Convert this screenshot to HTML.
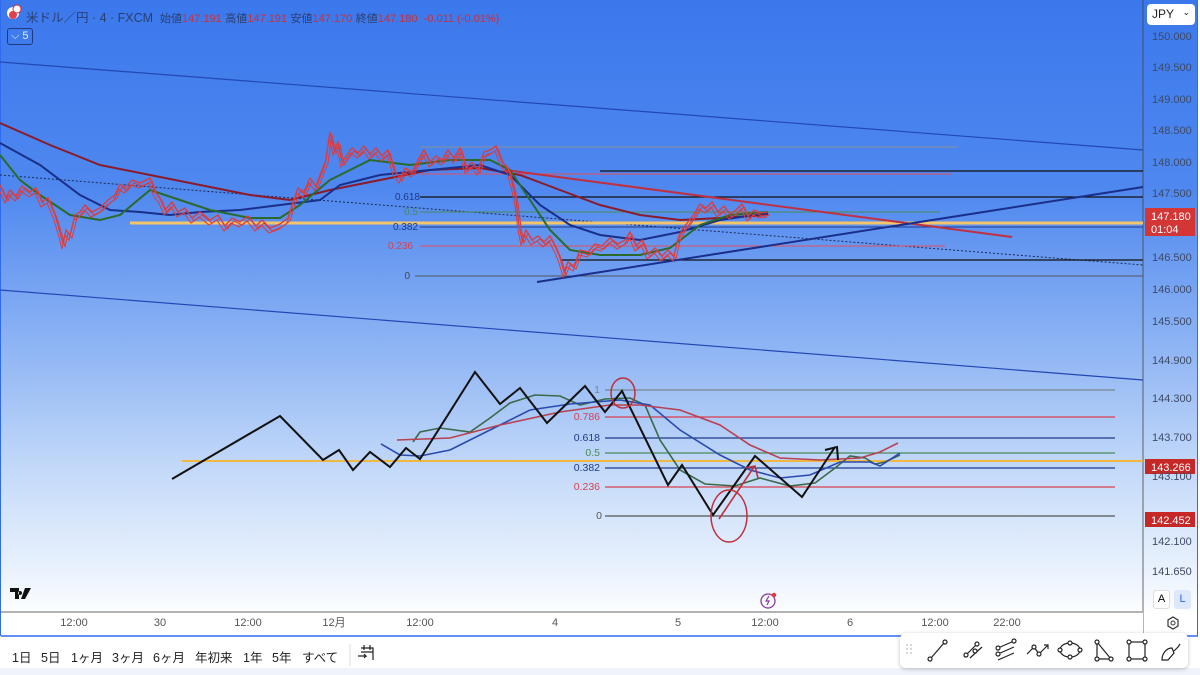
<!DOCTYPE html>
<html><head><meta charset="utf-8"><style>
*{margin:0;padding:0;box-sizing:border-box}
body{width:1200px;height:675px;overflow:hidden;background:#fff;font-family:"Liberation Sans","Noto Sans CJK JP",sans-serif;position:relative}
.chart{position:absolute;left:0;top:0;width:1198px;height:636px;border:1px solid #2f6bf0;border-top:none;background:linear-gradient(180deg,#3b78ec 0%,#4f88ef 30%,#8fb5f4 55%,#c6dbf9 75%,#eaf2fd 90%,#fbfdff 96%,#fff 100%)}
.ax{position:absolute;font-size:11px;color:#3d4a66}
.tl{position:absolute;top:617px;font-size:11px;line-height:13px;color:#555;transform:translateX(-50%)}
.bt{position:absolute;top:647px;font-size:12.5px;color:#222}
</style></head><body>
<div class="chart"></div>
<svg width="1200" height="675" style="position:absolute;left:0;top:0">
<line x1="1143" y1="0" x2="1143" y2="636" stroke="#444" stroke-width="0.8"/>
<rect x="1" y="611" width="1142" height="25" fill="#fff"/>
<rect x="1144" y="611" width="53" height="25" fill="#fff"/>
<line x1="1" y1="612" x2="1143" y2="612" stroke="#999" stroke-width="1.5"/>
<line x1="1" y1="636" x2="1198" y2="636" stroke="#2f6bf0" stroke-width="1.5"/>
<line x1="0" y1="62" x2="1143" y2="150" stroke="#2347b5" stroke-width="1.2"/>
<line x1="0" y1="290" x2="1143" y2="380" stroke="#2347b5" stroke-width="1.2"/>
<line x1="0" y1="175" x2="1143" y2="265" stroke="#1e2a55" stroke-width="1" stroke-dasharray="2,2"/>
<line x1="420" y1="147" x2="958" y2="147" stroke="#8a8f9a" stroke-width="1"/>
<line x1="420" y1="174" x2="952" y2="174" stroke="#e05060" stroke-width="1"/>
<line x1="600" y1="171" x2="1143" y2="171" stroke="#111" stroke-width="1.2"/>
<line x1="420" y1="197" x2="1143" y2="197" stroke="#111" stroke-width="1.2"/>
<line x1="420" y1="212" x2="940" y2="212" stroke="#4a8a5a" stroke-width="1"/>
<line x1="130" y1="223" x2="1143" y2="223" stroke="#f2c56a" stroke-width="3"/>
<line x1="420" y1="227" x2="1143" y2="227" stroke="#1e3a8a" stroke-width="1"/>
<line x1="420" y1="246" x2="945" y2="246" stroke="#e05060" stroke-width="1"/>
<line x1="560" y1="260" x2="1143" y2="260" stroke="#111" stroke-width="1.2"/>
<line x1="415" y1="276" x2="1143" y2="276" stroke="#555" stroke-width="1"/>
<g font-size="10" text-anchor="end">
<text x="420" y="200" fill="#1e3a8a">0.618</text>
<text x="418" y="215" fill="#4a8a5a">0.5</text>
<text x="418" y="230" fill="#1e3a8a">0.382</text>
<text x="413" y="249" fill="#d84050">0.236</text>
<text x="410" y="279" fill="#444">0</text>
</g>
<line x1="505" y1="170" x2="1012" y2="237" stroke="#c03040" stroke-width="2"/>
<line x1="537" y1="282" x2="1143" y2="187" stroke="#1a2f8a" stroke-width="2"/>
<polyline fill="none" stroke="#8b1a2a" stroke-width="2" points="0,123 50,145 100,165 150,175 200,185 250,195 290,200 330,190 380,180 430,170 480,168 520,175 560,190 600,205 640,215 680,220 720,218 768,215"/>
<polyline fill="none" stroke="#1a2f8a" stroke-width="2" points="0,143 40,165 80,195 110,210 140,212 170,215 200,212 240,210 280,205 320,200 340,185 380,175 430,170 480,165 510,175 540,205 570,225 600,235 640,240 680,232 720,220 768,213"/>
<polyline fill="none" stroke="#2a6a2a" stroke-width="2" points="0,155 20,180 40,195 70,215 100,220 120,215 150,190 180,200 210,210 250,218 280,218 300,205 330,180 370,160 410,165 450,160 490,160 510,170 530,200 550,230 570,250 600,255 640,255 670,248 700,225 730,215 768,212"/>
<g fill="none" stroke-width="1.3">
<polyline id="pr" stroke="#e03a3a" points="0,185 6,198 10,190 16,196 22,186 30,192 36,188 42,202 48,198 55,215 60,232 63,244 66,230 70,235 75,215 80,212 85,205 92,212 100,208 108,200 115,195 120,184 125,188 132,180 140,183 150,178 155,192 160,198 165,210 172,202 178,212 185,208 192,218 200,212 210,220 218,215 225,226 232,218 240,222 248,216 256,226 262,220 270,228 280,224 288,218 292,205 298,188 304,192 310,178 316,186 322,170 326,160 330,132 334,150 338,142 342,162 347,155 352,148 358,153 364,146 370,154 376,148 382,156 388,150 394,170 400,178 405,168 412,172 418,160 424,150 430,162 436,156 442,160 448,150 454,158 460,148 466,168 472,162 478,170 484,152 490,150 496,146 502,162 508,168 512,182 516,200 519,225 522,240 526,230 532,240 538,236 544,242 550,236 556,248 560,258 564,272 568,262 574,266 580,250 588,252 595,244 602,246 610,238 618,244 625,240 630,232 636,246 642,240 648,254 655,248 662,256 668,250 674,256 678,238 683,228 688,222 694,214 700,204 706,208 712,202 718,212 724,206 730,214 736,210 742,204 748,216 754,210 760,213 768,212"/>
<use href="#pr" stroke="#2a40b0" transform="translate(2,3)" stroke-width="1"/>
<use href="#pr" stroke="#e03a3a" transform="translate(-1,5)" stroke-width="1"/>
</g>
<g stroke-width="1.2">
<line x1="605" y1="390" x2="1115" y2="390" stroke="#7a8590"/>
<line x1="605" y1="417" x2="1115" y2="417" stroke="#d84050"/>
<line x1="605" y1="438" x2="1115" y2="438" stroke="#1e3a8a"/>
<line x1="605" y1="453" x2="1115" y2="453" stroke="#4a8a5a"/>
<line x1="605" y1="468" x2="1115" y2="468" stroke="#1e3a8a"/>
<line x1="605" y1="487" x2="1115" y2="487" stroke="#d84050"/>
<line x1="605" y1="516" x2="1115" y2="516" stroke="#555"/>
</g>
<line x1="182" y1="461" x2="1143" y2="461" stroke="#f0b840" stroke-width="2"/>
<g font-size="10.5" text-anchor="end">
<text x="600" y="393" fill="#7a8590">1</text>
<text x="600" y="420" fill="#d84050">0.786</text>
<text x="600" y="441" fill="#1e3a8a">0.618</text>
<text x="600" y="456" fill="#4a8a5a">0.5</text>
<text x="600" y="471" fill="#1e3a8a">0.382</text>
<text x="600" y="490" fill="#d84050">0.236</text>
<text x="602" y="519" fill="#555">0</text>
</g>
<polyline fill="none" stroke="#3a6a4a" stroke-width="1.6" points="413,442 420,432 440,428 470,432 490,418 510,403 535,395 560,396 580,405 605,399 630,398 645,405 660,440 680,470 705,484 735,486 760,478 790,486 815,483 835,468 850,456 865,458 875,464 885,462 900,455"/>
<polyline fill="none" stroke="#2a4ab0" stroke-width="1.6" points="381,444 400,455 420,456 450,450 490,430 530,410 570,404 620,400 650,405 680,430 720,455 750,470 780,478 810,475 840,462 870,462 880,466 900,453"/>
<polyline fill="none" stroke="#b84050" stroke-width="1.6" points="397,440 450,438 500,425 560,412 610,405 640,405 680,410 720,425 750,445 780,458 820,460 860,458 880,452 898,443"/>
<polyline fill="none" stroke="#111" stroke-width="2" points="172,479 280,416 323,460 339,450 353,470 370,452 390,467 406,448 420,459 475,372 500,404 520,388 547,423 585,386 605,412 622,391 668,485 682,465 713,515 755,456 802,497 835,447"/>
<polyline fill="none" stroke="#111" stroke-width="2" points="825,450 837,447 838,460"/>
<ellipse cx="623" cy="393" rx="12" ry="15" fill="none" stroke="#c0303a" stroke-width="1.5"/>
<ellipse cx="729" cy="516" rx="18" ry="26" fill="none" stroke="#c0303a" stroke-width="1.5"/>
<line x1="719" y1="519" x2="754" y2="467" stroke="#c0303a" stroke-width="1.6"/>
<polyline fill="none" stroke="#c0303a" stroke-width="1.6" points="745,468 755,466 758,478"/>
<rect x="1145" y="208" width="50" height="28" fill="#d43535"/>
<text x="1151" y="220" font-size="11" fill="#fff">147.180</text>
<text x="1151" y="233" font-size="11" fill="#fff">01:04</text>
<rect x="1145" y="459" width="50" height="15" fill="#c62828"/>
<text x="1151" y="471" font-size="11" fill="#fff">143.266</text>
<rect x="1145" y="512" width="50" height="15" fill="#c62828"/>
<text x="1151" y="524" font-size="11" fill="#fff">142.452</text>
<path d="M10 588h9v11h-4v-7h-5z M20 591a2 2 0 1 0 .1 0z M25 588h6l-6 11h-4z" fill="#111"/>
<circle cx="768" cy="601" r="7" fill="none" stroke="#8a3aa0" stroke-width="1.3"/>
<path d="M769 596l-3 5h3l-2 4" stroke="#8a3aa0" fill="none" stroke-width="1.2"/>
<circle cx="774" cy="595" r="2.2" fill="#e33"/>
<polygon points="1173,617 1178,620 1178,626 1173,629 1168,626 1168,620" fill="none" stroke="#333" stroke-width="1.2"/>
<circle cx="1173" cy="623" r="2" fill="none" stroke="#333"/>
<circle cx="13" cy="13" r="6" fill="#fff"/><circle cx="13" cy="15" r="4" fill="#e04050"/><circle cx="17" cy="9" r="4" fill="#fff" stroke="#d33" stroke-width="1"/>
<rect x="0" y="668" width="1200" height="7" fill="#f0f3fa"/>
<line x1="350" y1="644" x2="350" y2="666" stroke="#ddd"/>
<path d="M361 648h12v12 M364 645v5 M370 645v5 M361 652h12 M358 656h8l-2-2m2 2l-2 2" fill="none" stroke="#222" stroke-width="1.2"/>
</svg>
<div class="ax" style="left:26px;top:7px;font-size:12.5px;color:#2c3e70;white-space:nowrap">米ドル／円 · 4 · FXCM &nbsp;<span style="font-size:11px">始値</span><span style="color:#c8303e;font-size:11px">147.191</span> <span style="font-size:11px">高値</span><span style="color:#c8303e;font-size:11px">147.191</span> <span style="font-size:11px">安値</span><span style="color:#c8303e;font-size:11px">147.170</span> <span style="font-size:11px">終値</span><span style="color:#c8303e;font-size:11px">147.180 &nbsp;-0.011 (-0.01%)</span></div>
<div style="position:absolute;left:7px;top:28px;width:26px;height:17px;border:1px solid #1f3a80;border-radius:3px;font-size:11px;color:#e8eefc;padding-left:3px;line-height:15px">⌵ 5</div>
<div style="position:absolute;left:1147px;top:4px;width:48px;height:21px;background:#fff;border-radius:4px;font-size:12px;color:#222;padding:3px 5px">JPY <span style="float:right;font-size:9px">⌄</span></div>
<div class="ax" style="left:1152px;top:31px">150.000</div>
<div class="ax" style="left:1152px;top:62px">149.500</div>
<div class="ax" style="left:1152px;top:94px">149.000</div>
<div class="ax" style="left:1152px;top:125px">148.500</div>
<div class="ax" style="left:1152px;top:157px">148.000</div>
<div class="ax" style="left:1152px;top:188px">147.500</div>
<div class="ax" style="left:1152px;top:252px">146.500</div>
<div class="ax" style="left:1152px;top:284px">146.000</div>
<div class="ax" style="left:1152px;top:316px">145.500</div>
<div class="ax" style="left:1152px;top:355px">144.900</div>
<div class="ax" style="left:1152px;top:393px">144.300</div>
<div class="ax" style="left:1152px;top:432px">143.700</div>
<div class="ax" style="left:1152px;top:471px">143.100</div>
<div class="ax" style="left:1152px;top:536px">142.100</div>
<div class="ax" style="left:1152px;top:566px">141.650</div>
<div style="position:absolute;left:1153px;top:590px;width:17px;height:19px;background:#fff;border:1px solid #ddd;border-radius:3px;font-size:11px;text-align:center;line-height:17px">A</div>
<div style="position:absolute;left:1174px;top:590px;width:17px;height:19px;background:#dde8fb;border-radius:3px;font-size:11px;color:#2962ff;text-align:center;line-height:19px">L</div>
<div class="tl" style="left:74px">12:00</div><div class="tl" style="left:160px">30</div><div class="tl" style="left:248px">12:00</div><div class="tl" style="left:334px">12月</div><div class="tl" style="left:420px">12:00</div><div class="tl" style="left:555px">4</div><div class="tl" style="left:678px">5</div><div class="tl" style="left:765px">12:00</div><div class="tl" style="left:850px">6</div><div class="tl" style="left:935px">12:00</div><div class="tl" style="left:1007px">22:00</div>
<div class="bt" style="left:12px">1日</div><div class="bt" style="left:41px">5日</div><div class="bt" style="left:71px">1ヶ月</div><div class="bt" style="left:112px">3ヶ月</div><div class="bt" style="left:153px">6ヶ月</div><div class="bt" style="left:195px">年初来</div><div class="bt" style="left:243px">1年</div><div class="bt" style="left:272px">5年</div><div class="bt" style="left:302px">すべて</div>
<div style="position:absolute;left:900px;top:633px;width:288px;height:35px;background:#fff;border-radius:6px;box-shadow:0 1px 4px rgba(0,0,0,.25)">
<svg width="288" height="35" fill="none" stroke="#222" stroke-width="1.2">
<g fill="#bbb" stroke="none"><circle cx="7" cy="12" r=".9"/><circle cx="11" cy="12" r=".9"/><circle cx="7" cy="16" r=".9"/><circle cx="11" cy="16" r=".9"/><circle cx="7" cy="20" r=".9"/><circle cx="11" cy="20" r=".9"/></g>
<line x1="31" y1="25" x2="44" y2="10"/><circle cx="30" cy="26" r="2" fill="#fff"/><circle cx="45" cy="9" r="2" fill="#fff"/>
<path d="M64 24l14-14M70 25l12-11"/><circle cx="66" cy="22" r="2" fill="#fff"/><circle cx="77" cy="11" r="2" fill="#fff"/><circle cx="75" cy="18" r="2" fill="#fff"/>
<path d="M98 15l16-7M98 21l16-7M98 27l16-7"/><circle cx="98" cy="15" r="2" fill="#fff"/><circle cx="114" cy="8" r="2" fill="#fff"/><circle cx="98" cy="21" r="2" fill="#fff"/>
<path d="M127 21l7-7 5 7 9-9m-4 0h4v4"/><circle cx="134" cy="14" r="2" fill="#fff"/><circle cx="139" cy="21" r="2" fill="#fff"/>
<ellipse cx="170" cy="17" rx="10" ry="7"/><circle cx="160" cy="17" r="2" fill="#fff"/><circle cx="180" cy="17" r="2" fill="#fff"/><circle cx="170" cy="10" r="2" fill="#fff"/><circle cx="170" cy="24" r="2" fill="#fff"/>
<path d="M197 9v17h14z"/><circle cx="197" cy="9" r="2" fill="#fff"/><circle cx="197" cy="26" r="2" fill="#fff"/><circle cx="211" cy="26" r="2" fill="#fff"/>
<rect x="229" y="9" width="16" height="17"/><circle cx="229" cy="9" r="2" fill="#fff"/><circle cx="245" cy="9" r="2" fill="#fff"/><circle cx="229" cy="26" r="2" fill="#fff"/><circle cx="245" cy="26" r="2" fill="#fff"/>
<path d="M262 27c0-6 4-12 10-12l2 5-6 7zM274 18l4-4 2-3"/>
</svg></div>
</body></html>
